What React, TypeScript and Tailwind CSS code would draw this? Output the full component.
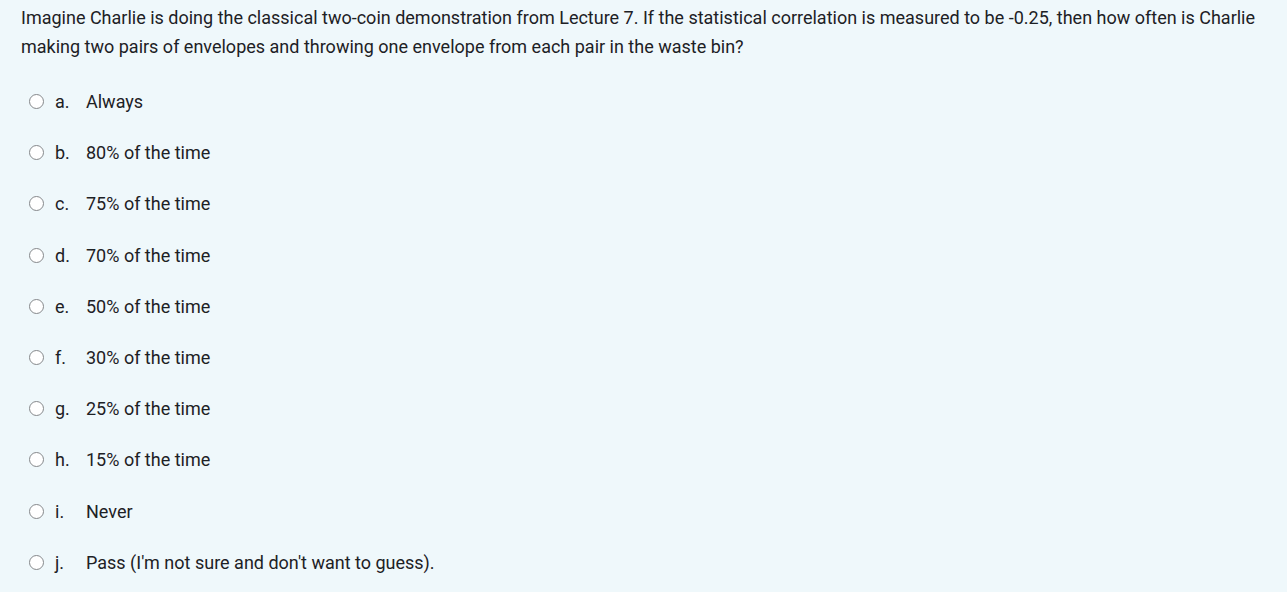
import React from "react";

const options = [
  ["a.", "Always"],
  ["b.", "80% of the time"],
  ["c.", "75% of the time"],
  ["d.", "70% of the time"],
  ["e.", "50% of the time"],
  ["f.", "30% of the time"],
  ["g.", "25% of the time"],
  ["h.", "15% of the time"],
  ["i.", "Never"],
  ["j.", "Pass (I'm not sure and don't want to guess)."],
];

export default function App() {
  return (
    <div
      className="w-[1287px] h-[592px] bg-[#eff8fb] text-[#1d2125] overflow-hidden"
      style={{ fontFamily: "Roboto, 'Liberation Sans', sans-serif" }}
    >
      <div className="pl-[21px] pt-[3px] text-[18px] leading-[29px] pr-[20px]">
        Imagine Charlie is doing the classical two-coin demonstration from Lecture 7. If the statistical correlation is measured to be -0.25, then how often is Charlie making two pairs of envelopes and throwing one envelope from each pair in the waste bin?
      </div>
      <div className="mt-[26px] flex flex-col gap-[22.2px] pl-[29px]">
        {options.map(([l, t]) => (
          <div key={l} className="flex items-center h-[29px] text-[18px]">
            <span className="w-[15px] h-[15px] rounded-full border-[1.5px] border-[#85888b] bg-white shrink-0" />
            <span className="ml-[11px] w-[31px]">{l}</span>
            <span>{t}</span>
          </div>
        ))}
      </div>
    </div>
  );
}
